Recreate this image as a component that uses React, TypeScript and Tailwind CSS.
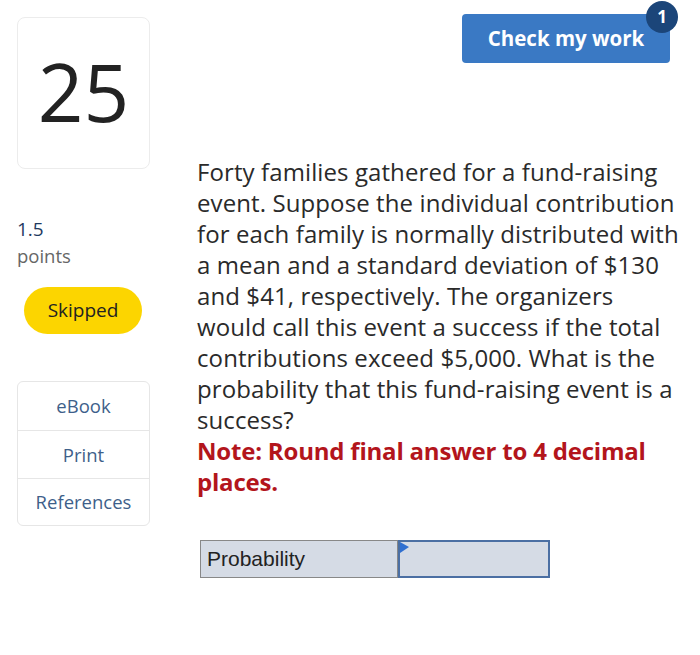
const lines = [
  'Forty families gathered for a fund-raising',
  'event. Suppose the individual contribution',
  'for each family is normally distributed with',
  'a mean and a standard deviation of $130',
  'and $41, respectively. The organizers',
  'would call this event a success if the total',
  'contributions exceed $5,000. What is the',
  'probability that this fund-raising event is a',
  'success?',
];

const font = { fontFamily: '"Open Sans", "Lato", sans-serif' };

export default function App() {
  return (
    <div className="w-[700px] h-[655px] bg-white relative overflow-hidden" style={font}>
      <div className="flex">
        {/* left column */}
        <div className="w-[197px] shrink-0 pl-[17px] pt-[17px]">
          <div className="w-[133px] h-[152px] rounded-[8px] border border-[#ececec] flex items-center justify-center">
            <span className="text-[80px] text-[#222] leading-none pb-[4px]">25</span>
          </div>
          <div className="mt-[48px] text-[19px] leading-[24px] text-[#1f3a5f]">1.5</div>
          <div className="mt-[4px] text-[18.5px] leading-[22px] text-[#666]">points</div>
          <div className="mt-[20px] ml-[7px] w-[118px] h-[47px] rounded-full bg-[#fcd500] flex items-center justify-center text-[19px] text-[#222]">
            Skipped
          </div>
          <div className="mt-[47px] w-[133px] rounded-[6px] border border-[#e6e6e6] flex flex-col text-[18.5px] text-[#3e5f8a]">
            <div className="h-[49px] flex items-center justify-center border-b border-[#e6e6e6]">eBook</div>
            <div className="h-[48px] flex items-center justify-center border-b border-[#e6e6e6]">Print</div>
            <div className="h-[46px] flex items-center justify-center">References</div>
          </div>
        </div>

        {/* right column */}
        <div className="flex-1 pt-[14px]">
          <div className="flex justify-end pr-[30px]">
            <div className="relative">
              <button className="w-[208px] h-[49px] rounded-[4px] bg-[#3a79c4] text-white text-[20.5px] font-bold">
                Check my work
              </button>
              <div className="absolute -top-[13px] -right-[8px] w-[32px] h-[32px] rounded-full bg-[#1b4579] flex items-center justify-center text-white text-[17px] font-bold">
                1
              </div>
            </div>
          </div>
          <div className="mt-[93px] text-[24px] leading-[31px] text-[#2a2a2a] tracking-[0.1px]">
            {lines.map((l) => (
              <div key={l} className="whitespace-nowrap">{l}</div>
            ))}
            <div className="font-bold text-[#b3151c] tracking-[-0.2px]">
              <div>Note: Round final answer to 4 decimal</div>
              <div>places.</div>
            </div>
          </div>
          <div className="mt-[43px] ml-[3px] flex h-[38px] w-[350px]">
            <div className="w-[198px] bg-[#d5dbe5] border border-[#888] flex items-center pl-[6px] text-[21px] text-[#222]" style={{ fontFamily: '"Liberation Sans", Arial, sans-serif' }}>
              Probability
            </div>
            <div className="relative flex-1 bg-[#d5dbe5] border-2 border-[#4b6fa3]">
              <svg className="absolute left-0 top-0" width="9" height="12" viewBox="0 0 9 12">
                <path d="M0 0 L9 5 L0 11 Z" fill="#2f6fd0" />
              </svg>
            </div>
          </div>
        </div>
      </div>
    </div>
  );
}
